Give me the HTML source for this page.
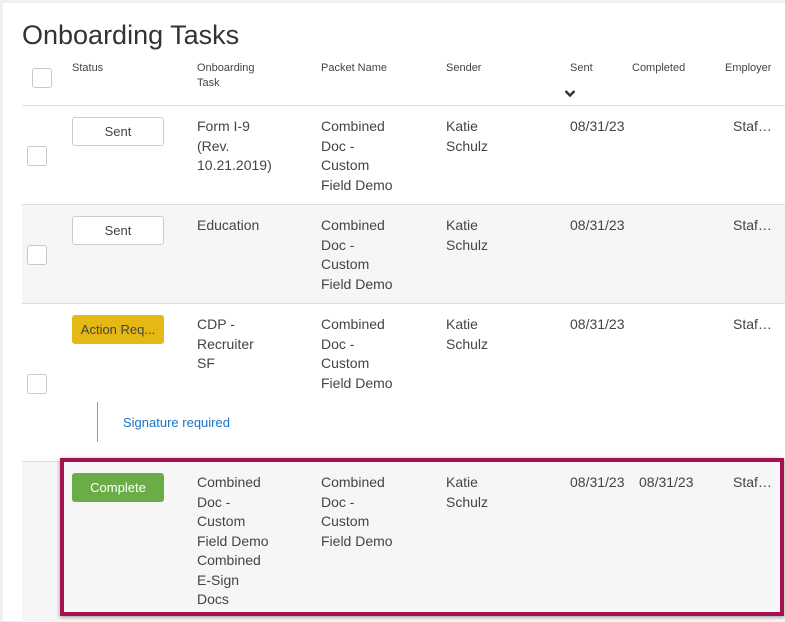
<!DOCTYPE html><html><head><style>
body{margin:0;width:785px;height:621px;overflow:hidden;background:#f0f0f0;font-family:"Liberation Sans",sans-serif;color:#444;position:relative}
.pg{position:absolute;left:3px;top:3px;right:0;bottom:0;background:#fff}
.a{position:absolute}
h1{position:absolute;left:22px;top:20px;margin:0;font-weight:normal;font-size:27px;color:#333}
.h{font-size:11px;color:#444;line-height:15px}
.t{font-size:14px;line-height:19.5px;color:#444}
.cb{position:absolute;width:18px;height:18px;border:1px solid #c8c8c8;border-radius:3px;background:#fff}
.btn{position:absolute;left:72px;width:90px;height:27px;border:1px solid #ccc;border-radius:3px;font-size:13px;text-align:center;line-height:27px;color:#444;background:#fff}
.row{position:absolute;left:22px;right:0;border-top:1px solid #ddd}
</style></head><body><div class="pg"></div>
<h1>Onboarding Tasks</h1>
<div class="cb" style="left:32px;top:68px"></div>
<div class="a h" style="left:72px;top:61px">Status</div>
<div class="a h" style="left:197px;top:61px">Onboarding<br>Task</div>
<div class="a h" style="left:321px;top:61px">Packet Name</div>
<div class="a h" style="left:446px;top:61px">Sender</div>
<div class="a h" style="left:570px;top:61px">Sent</div>
<svg class="a" style="left:564px;top:89px" width="12" height="9" viewBox="0 0 12 9"><path d="M1.5 2l4.5 4.5L10.5 2" stroke="#333" stroke-width="2.4" fill="none"/></svg>
<div class="a h" style="left:632px;top:61px">Completed</div>
<div class="a h" style="left:725px;top:61px">Employer</div>

<div class="row" style="top:105px;height:99px;background:#fff"></div>
<div class="cb" style="left:27px;top:146px"></div>
<div class="btn" style="top:117px">Sent</div>
<div class="a t" style="left:197px;top:117px">Form I-9<br>(Rev.<br>10.21.2019)</div>
<div class="a t" style="left:321px;top:117px">Combined<br>Doc -<br>Custom<br>Field Demo</div>
<div class="a t" style="left:446px;top:117px">Katie<br>Schulz</div>
<div class="a t" style="left:570px;top:117px">08/31/23</div>
<div class="a t" style="left:733px;top:117px">Staf…</div>

<div class="row" style="top:204px;height:99px;background:#f6f6f6"></div>
<div class="cb" style="left:27px;top:245px"></div>
<div class="btn" style="top:216px">Sent</div>
<div class="a t" style="left:197px;top:216px">Education</div>
<div class="a t" style="left:321px;top:216px">Combined<br>Doc -<br>Custom<br>Field Demo</div>
<div class="a t" style="left:446px;top:216px">Katie<br>Schulz</div>
<div class="a t" style="left:570px;top:216px">08/31/23</div>
<div class="a t" style="left:733px;top:216px">Staf…</div>

<div class="row" style="top:303px;height:158px;background:#fff"></div>
<div class="cb" style="left:27px;top:374px"></div>
<div class="btn" style="top:315px;background:#e6b816;border-color:#e6b816;color:#444">Action Req...</div>
<div class="a t" style="left:197px;top:315px">CDP -<br>Recruiter<br>SF</div>
<div class="a t" style="left:321px;top:315px">Combined<br>Doc -<br>Custom<br>Field Demo</div>
<div class="a t" style="left:446px;top:315px">Katie<br>Schulz</div>
<div class="a t" style="left:570px;top:315px">08/31/23</div>
<div class="a t" style="left:733px;top:315px">Staf…</div>
<div class="a" style="left:97px;top:402px;width:1px;height:40px;background:#999"></div>
<div class="a" style="left:123px;top:415px;font-size:13px;color:#1a73c8">Signature required</div>

<div class="row" style="top:461px;height:160px;background:#f6f6f6"></div>
<div class="a" style="left:60px;top:458px;width:716px;height:150px;border:4px solid #a3124f;box-shadow:0 1px 4px rgba(0,0,0,.4)"></div>
<div class="btn" style="top:473px;background:#6aad46;border-color:#6aad46;color:#fff">Complete</div>
<div class="a t" style="left:197px;top:473px">Combined<br>Doc -<br>Custom<br>Field Demo<br>Combined<br>E-Sign<br>Docs</div>
<div class="a t" style="left:321px;top:473px">Combined<br>Doc -<br>Custom<br>Field Demo</div>
<div class="a t" style="left:446px;top:473px">Katie<br>Schulz</div>
<div class="a t" style="left:570px;top:473px">08/31/23</div>
<div class="a t" style="left:639px;top:473px">08/31/23</div>
<div class="a t" style="left:733px;top:473px">Staf…</div>
</body></html>
